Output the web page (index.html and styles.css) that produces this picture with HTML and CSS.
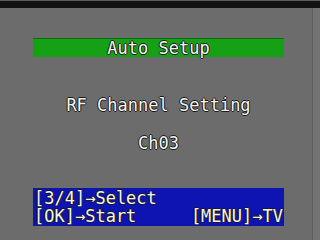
FILE: index.html
```html
<!DOCTYPE html>
<html>
<head>
<meta charset="utf-8">
<link rel="stylesheet" href="styles.css">
</head>
<body>
<div class="screen">
  <div class="topbar"></div>
  <div class="area">
    <div class="main">
      <div class="title">Auto Setup</div>
      <div class="label">RF Channel Setting</div>
      <div class="value">Ch03</div>
      <div class="help">
        <div class="row">[3/4]→Select</div>
        <div class="row split"><span>[OK]→Start</span><span>[MENU]→TV</span></div>
      </div>
    </div>
    <div class="edge"></div>
  </div>
</div>
</body>
</html>
```
FILE: styles.css
```css
html, body {
  margin: 0;
  padding: 0;
}
body {
  width: 320px;
  height: 240px;
  overflow: hidden;
  background: #6c6c6c;
}
.screen {
  width: 320px;
  height: 240px;
  display: flex;
  flex-direction: column;
  font-family: "DejaVu Sans Mono", "Liberation Mono", monospace;
  font-size: 17px;
  color: #f4f4f4;
  text-shadow: -1px 0 #1a1a1a, 1px 0 #1a1a1a, 0 -1px #1a1a1a, 0 1px #1a1a1a;
}
.topbar {
  height: 7px;
  border-top: 1px solid #5a5a5a;
  background: #121212;
}
.area {
  flex: 1;
  display: flex;
}
.main {
  width: 251px;
  margin-left: 33px;
  display: flex;
  flex-direction: column;
}
.edge {
  margin-left: auto;
  width: 7px;
  border-left: 1px solid #606060;
  background: #737373;
}
.title {
  margin-top: 30px;
  height: 17px;
  padding-top: 2px;
  line-height: 17px;
  text-align: center;
  background: #15a015;
  box-shadow: inset 0 1px 0 #0b6e0b;
}
.label {
  margin-top: 39px;
  line-height: 18px;
  text-align: center;
}
.value {
  margin-top: 20px;
  line-height: 18px;
  text-align: center;
}
.help {
  margin-top: 36px;
  background: #0e14b2;
  padding: 1px 1px 1px 1px;
}
.row {
  line-height: 18px;
  white-space: pre;
}
.split {
  display: flex;
  justify-content: space-between;
}
```
